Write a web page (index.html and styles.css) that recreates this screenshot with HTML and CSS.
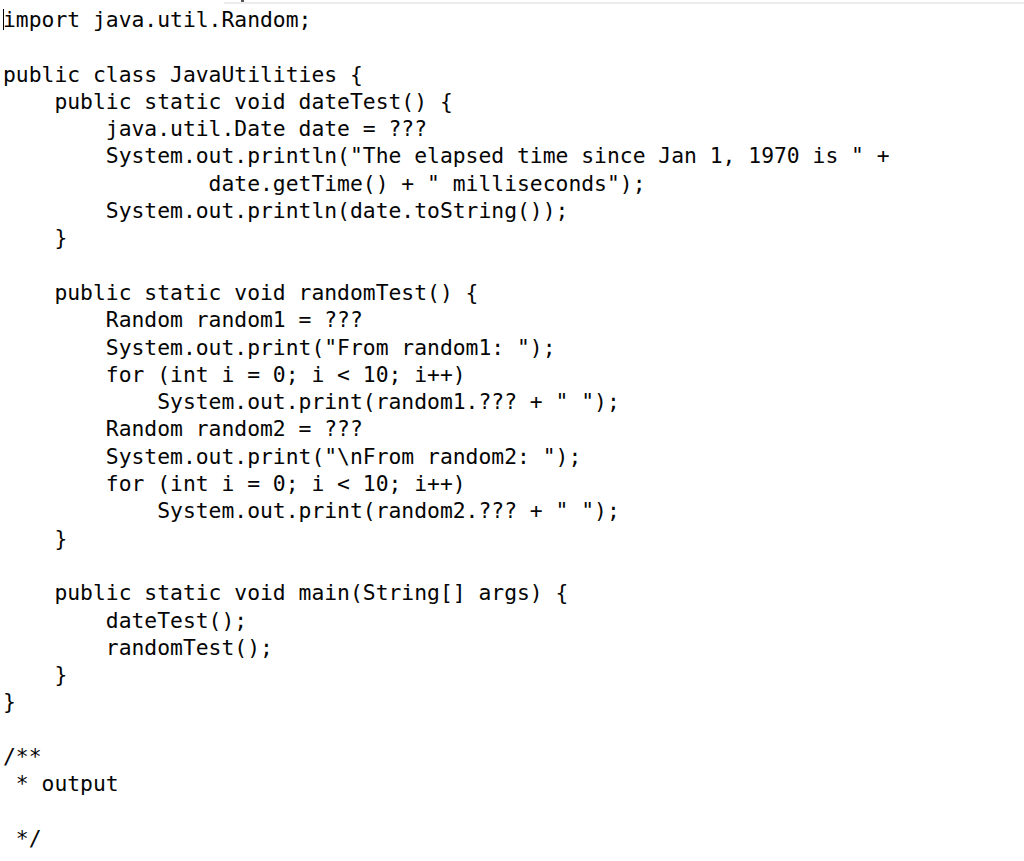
FILE: index.html
```html
<!DOCTYPE html>
<html>
<head>
<meta charset="utf-8">
<link rel="stylesheet" href="styles.css">
</head>
<body>
<div class="editor">
<div class="topline"></div>
<div class="tick"></div>
<div class="caret"></div>
<pre class="code">import java.util.Random;

public class JavaUtilities {
    public static void dateTest() {
        java.util.Date date = ???
        System.out.println("The elapsed time since Jan 1, 1970 is " +
                date.getTime() + " milliseconds");
        System.out.println(date.toString());
    }

    public static void randomTest() {
        Random random1 = ???
        System.out.print("From random1: ");
        for (int i = 0; i &lt; 10; i++)
            System.out.print(random1.??? + " ");
        Random random2 = ???
        System.out.print("\nFrom random2: ");
        for (int i = 0; i &lt; 10; i++)
            System.out.print(random2.??? + " ");
    }

    public static void main(String[] args) {
        dateTest();
        randomTest();
    }
}

/**
 * output

 */</pre>
</div>
</body>
</html>
```
FILE: styles.css
```css
html, body {
  margin: 0;
  padding: 0;
  background: #ffffff;
}

.editor {
  position: relative;
  width: 1024px;
  height: 861px;
  overflow: hidden;
  background: #ffffff;
}

.code {
  margin: 0;
  padding: 6px 0 0 3px;
  font-family: "DejaVu Sans Mono", monospace;
  font-size: 21.35px;
  line-height: 27.3px;
  color: #050505;
}

.topline {
  position: absolute;
  left: 224px;
  right: 0;
  top: 2px;
  height: 2px;
  background: #ececec;
}

.tick {
  position: absolute;
  left: 241px;
  top: 0;
  width: 3px;
  height: 2px;
  background: #555555;
}

.caret {
  position: absolute;
  left: 3px;
  top: 9px;
  width: 1px;
  height: 21px;
  background: #000000;
}
```
